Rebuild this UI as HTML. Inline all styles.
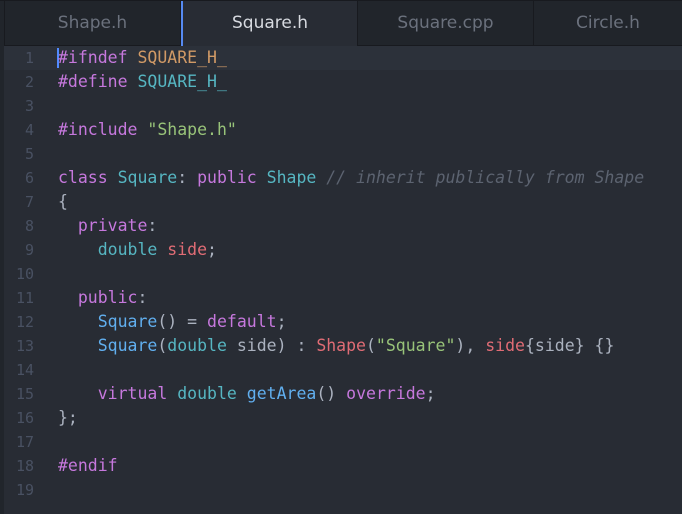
<!DOCTYPE html>
<html><head><meta charset="utf-8"><style>
body{margin:0;width:682px;height:514px;background:#282c34;overflow:hidden;font-family:"DejaVu Sans Mono","Liberation Mono",monospace;}
.tabs{position:absolute;top:0;left:0;width:682px;height:45px;background:#21252b;border-top:1px solid #181a1f;box-sizing:border-box;}
.tab{position:absolute;top:0;height:45px;box-sizing:border-box;font-family:"DejaVu Sans","Liberation Sans",sans-serif;font-size:17px;color:#6b717d;text-align:center;line-height:44px;border-right:1px solid #181a1f;border-bottom:1px solid #181a1f;}
.act{background:#282c34;color:#d7dae0;border-bottom:none;}
.ed{position:absolute;top:45px;left:0;width:682px;height:469px;}
.ln{position:absolute;left:0;width:34px;text-align:right;color:#495162;font-size:15px;}
.c{position:absolute;left:58px;font-size:16.5px;color:#abb2bf;white-space:pre;}
.row{position:absolute;left:0;width:682px;height:24px;line-height:24px;}
.p{color:#c678dd}.y{color:#56b6c2}.o{color:#d19a66}.r{color:#e06c75}.g{color:#98c379}.b{color:#61afef}.m{color:#5c6370;font-style:italic}
</style></head><body>
<div class="tabs">
<div class="tab" style="left:4px;width:177px;border-left:1px solid #181a1f">Shape.h</div>
<div style="position:absolute;left:181px;top:0;width:2px;height:45px;background:#568af2"></div>
<div class="tab act" style="left:183px;width:175px">Square.h</div>
<div class="tab" style="left:358px;width:176px">Square.cpp</div>
<div class="tab" style="left:534px;width:148px;border-right:none">Circle.h</div>
</div>
<div class="ed">
<div class="row" style="top:1px;background:#2c313a"></div>
<div style="position:absolute;left:57px;top:3px;width:2px;height:20px;background:#528bff"></div>
<div style="position:absolute;left:0;top:0;width:4px;height:469px;background:#21252b"></div>
</div>
<div class="ed" style="pointer-events:none">
<div class="row" style="top:1px"><span class="ln">1</span><span class="c"><span class="p">#ifndef</span> <span class="o">SQUARE_H_</span></span></div>
<div class="row" style="top:25px"><span class="ln">2</span><span class="c"><span class="p">#define</span> <span class="y">SQUARE_H_</span></span></div>
<div class="row" style="top:49px"><span class="ln">3</span></div>
<div class="row" style="top:73px"><span class="ln">4</span><span class="c"><span class="p">#include</span> <span class="g">"Shape.h"</span></span></div>
<div class="row" style="top:97px"><span class="ln">5</span></div>
<div class="row" style="top:121px"><span class="ln">6</span><span class="c"><span class="p">class</span> <span class="y">Square</span>: <span class="p">public</span> <span class="y">Shape</span> <span class="m">// inherit publically from Shape</span></span></div>
<div class="row" style="top:145px"><span class="ln">7</span><span class="c">{</span></div>
<div class="row" style="top:169px"><span class="ln">8</span><span class="c">  <span class="p">private</span>:</span></div>
<div class="row" style="top:193px"><span class="ln">9</span><span class="c">    <span class="y">double</span> <span class="r">side</span>;</span></div>
<div class="row" style="top:217px"><span class="ln">10</span></div>
<div class="row" style="top:241px"><span class="ln">11</span><span class="c">  <span class="p">public</span>:</span></div>
<div class="row" style="top:265px"><span class="ln">12</span><span class="c">    <span class="b">Square</span>() = <span class="p">default</span>;</span></div>
<div class="row" style="top:289px"><span class="ln">13</span><span class="c">    <span class="b">Square</span>(<span class="y">double</span> side) : <span class="r">Shape</span>(<span class="g">"Square"</span>), <span class="r">side</span>{side} {}</span></div>
<div class="row" style="top:313px"><span class="ln">14</span></div>
<div class="row" style="top:337px"><span class="ln">15</span><span class="c">    <span class="p">virtual</span> <span class="y">double</span> <span class="b">getArea</span>() <span class="p">override</span>;</span></div>
<div class="row" style="top:361px"><span class="ln">16</span><span class="c">};</span></div>
<div class="row" style="top:385px"><span class="ln">17</span></div>
<div class="row" style="top:409px"><span class="ln">18</span><span class="c"><span class="p">#endif</span></span></div>
<div class="row" style="top:433px"><span class="ln">19</span></div>
</div>
</body></html>
